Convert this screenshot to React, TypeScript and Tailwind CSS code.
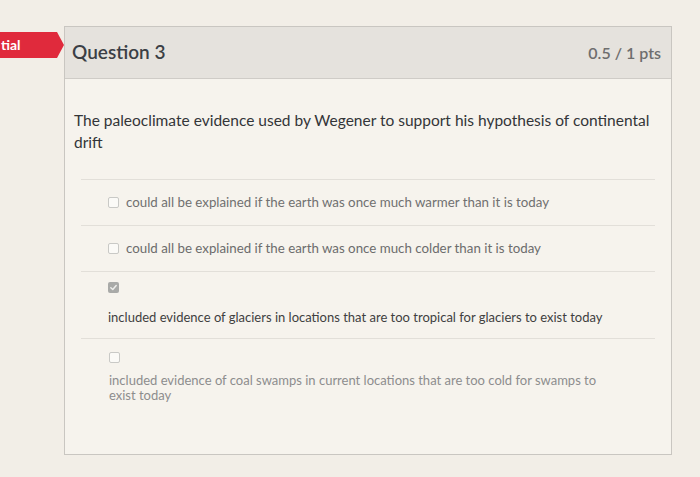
import React from 'react';

type Answer = {
  text: string;
  checked?: boolean;
  stacked?: boolean;
  tone: string;
};

const answers: Answer[] = [
  { text: 'could all be explained if the earth was once much warmer than it is today', tone: 'text-[#707070]' },
  { text: 'could all be explained if the earth was once much colder than it is today', tone: 'text-[#6c6c6c]' },
  {
    text: 'included evidence of glaciers in locations that are too tropical for glaciers to exist today',
    checked: true,
    stacked: true,
    tone: 'text-[#3f3f3f]',
  },
  {
    text: 'included evidence of coal swamps in current locations that are too cold for swamps to exist today',
    stacked: true,
    tone: 'text-[#8d8d8d]',
  },
];

const Box = ({ checked }: { checked?: boolean }) => (
  <span
    className={
      checked
        ? 'flex h-[11px] w-[11px] shrink-0 items-center justify-center rounded-[2px] bg-[#a9aaa8]'
        : 'block h-[11px] w-[11px] shrink-0 rounded-[2px] border border-[#c9c9c6] bg-[#fbfaf7]'
    }
  >
    {checked && (
      <svg width="9" height="9" viewBox="0 0 10 10" fill="none">
        <path d="M2 5.2 4.2 7.3 8 2.8" stroke="#eeeeec" strokeWidth="1.6" strokeLinecap="round" strokeLinejoin="round" />
      </svg>
    )}
  </span>
);

export default function App() {
  return (
    <div
      className="flex h-[477px] w-[700px] overflow-hidden bg-[#f2eee7] pt-[26px]"
      style={{ fontFamily: 'Lato, "Open Sans", sans-serif' }}
    >
      <div className="w-[64px] shrink-0 pt-[6px]">
        <div className="flex h-[26px] items-center">
          <div className="flex h-[26px] w-[57px] items-center bg-[#e02a3c] pl-[1px]">
            <span className="text-[14px] font-bold leading-none text-white">tial</span>
          </div>
          <div className="h-0 w-0 border-y-[13px] border-l-[7px] border-y-transparent border-l-[#e02a3c]" />
        </div>
      </div>

      {/* question card */}
      <div className="mr-[28px] mb-[22px] flex flex-1 flex-col border border-[#c9c6c1] bg-[#f6f3ed]">
        <div className="flex h-[52px] items-center justify-between border-b border-[#cfccc7] bg-[#e5e2dd] pl-[7px] pr-[10px]">
          <span className="text-[19px] font-semibold text-[#3b3f45]">Question 3</span>
          <span className="text-[16px] font-semibold text-[#6e6e6e]">0.5 / 1 pts</span>
        </div>

        <div className="px-[9px] pt-[30px]">
          <p className="text-[15.5px] leading-[22px] text-[#333538]">
            The paleoclimate evidence used by Wegener to support his hypothesis of continental drift
          </p>
        </div>

        <div className="mx-[16px] mt-[26px]">
          {answers.map((a, i) =>
            a.stacked ? (
              <div
                key={i}
                className={
                  i === 2
                    ? 'border-t border-[#e2dfd9] pl-[27px] pt-[10px] pb-[13px]'
                    : 'border-t border-[#e2dfd9] pl-[28px] pt-[13px]'
                }
              >
                <Box checked={a.checked} />
                <p
                  className={
                    i === 2
                      ? `mt-[16px] max-w-[505px] text-[13px] leading-[16px] ${a.tone}`
                      : `mt-[10px] max-w-[500px] text-[13px] leading-[15px] ${a.tone}`
                  }
                >
                  {a.text}
                </p>
              </div>
            ) : (
              <div key={i} className="flex h-[46px] items-center gap-[7px] border-t border-[#e2dfd9] pl-[27px]">
                <Box />
                <span className={`text-[13.3px] ${a.tone}`}>{a.text}</span>
              </div>
            )
          )}
        </div>
      </div>
    </div>
  );
}
